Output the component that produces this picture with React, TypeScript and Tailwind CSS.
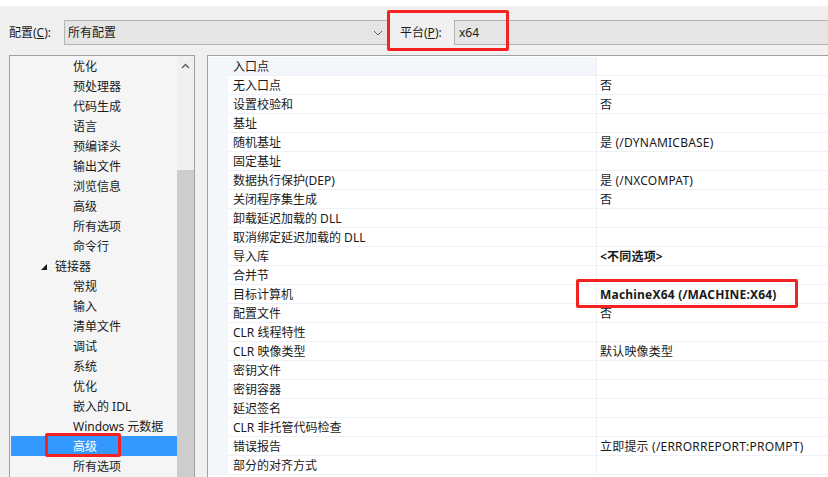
import React from "react";

const leftItems: { t: string; lvl: number; sel?: boolean; exp?: boolean }[] = [
  { t: "优化", lvl: 2 },
  { t: "预处理器", lvl: 2 },
  { t: "代码生成", lvl: 2 },
  { t: "语言", lvl: 2 },
  { t: "预编译头", lvl: 2 },
  { t: "输出文件", lvl: 2 },
  { t: "浏览信息", lvl: 2 },
  { t: "高级", lvl: 2 },
  { t: "所有选项", lvl: 2 },
  { t: "命令行", lvl: 2 },
  { t: "链接器", lvl: 1, exp: true },
  { t: "常规", lvl: 2 },
  { t: "输入", lvl: 2 },
  { t: "清单文件", lvl: 2 },
  { t: "调试", lvl: 2 },
  { t: "系统", lvl: 2 },
  { t: "优化", lvl: 2 },
  { t: "嵌入的 IDL", lvl: 2 },
  { t: "Windows 元数据", lvl: 2 },
  { t: "高级", lvl: 2, sel: true },
  { t: "所有选项", lvl: 2 },
];

const rows: { n: string; v?: string; b?: boolean; hl?: boolean }[] = [
  { n: "入口点", hl: true },
  { n: "无入口点", v: "否" },
  { n: "设置校验和", v: "否" },
  { n: "基址" },
  { n: "随机基址", v: "是 (/DYNAMICBASE)" },
  { n: "固定基址" },
  { n: "数据执行保护(DEP)", v: "是 (/NXCOMPAT)" },
  { n: "关闭程序集生成", v: "否" },
  { n: "卸载延迟加载的 DLL" },
  { n: "取消绑定延迟加载的 DLL" },
  { n: "导入库", v: "<不同选项>", b: true },
  { n: "合并节" },
  { n: "目标计算机", v: "MachineX64 (/MACHINE:X64)", b: true },
  { n: "配置文件", v: "否" },
  { n: "CLR 线程特性" },
  { n: "CLR 映像类型", v: "默认映像类型" },
  { n: "密钥文件" },
  { n: "密钥容器" },
  { n: "延迟签名" },
  { n: "CLR 非托管代码检查" },
  { n: "错误报告", v: "立即提示 (/ERRORREPORT:PROMPT)" },
  { n: "部分的对齐方式" },
];

export default function App() {
  return (
    <div
      className="relative w-[828px] h-[477px] overflow-hidden bg-[#f0f0f0] text-[12px] leading-none text-[#1a1a1a]"
      style={{ fontFamily: '"Noto Sans", "Noto Sans CJK SC", sans-serif' }}
    >
      <div className="h-[6px] bg-white" />
      {/* header */}
      <div className="mt-[14px] flex h-[25px] items-center">
        <div className="ml-[9px] w-[55px]">
          配置(<span className="underline">C</span>):
        </div>
        <div className="flex h-[25px] w-[324px] items-center justify-between border border-[#b4b4b4] bg-[#e5e5e5] pl-[3px] pr-[4px]">
          <span>所有配置</span>
          <svg width="10" height="6" viewBox="0 0 10 6" className="mt-[1px]">
            <path d="M1 1 L5 5 L9 1" fill="none" stroke="#606060" strokeWidth="1" />
          </svg>
        </div>
        <div className="ml-[12px] w-[54px]">
          平台(<span className="underline">P</span>):
        </div>
        <div className="flex h-[25px] flex-1 items-center border border-r-0 border-[#b4b4b4] bg-[#e5e5e5] pl-[4px]">
          x64
        </div>
      </div>

      {/* panels */}
      <div className="mt-[10px] flex">
        {/* left tree */}
        <div className="ml-[9px] flex h-[440px] w-[186px] border border-[#a0a0a0] bg-[#f5f5f5]">
          <div className="flex-1 pl-[1px]">
            {leftItems.map((it, i) => (
              <div
                key={i}
                className={`flex h-[20px] items-center pt-[2px] ${it.sel ? "bg-[#3399ff] text-white" : ""}`}
              >
                {it.lvl === 1 ? (
                  <>
                    <svg width="6" height="6" viewBox="0 0 6 6" className="ml-[30px]">
                      <path d="M6 0 L6 6 L0 6 Z" fill="#1a1a1a" />
                    </svg>
                    <span className="ml-[8px]">{it.t}</span>
                  </>
                ) : (
                  <span className="ml-[62px]">{it.t}</span>
                )}
              </div>
            ))}
          </div>
          <div className="flex w-[17px] flex-col bg-[#f0f0f0]">
            <div className="flex h-[20px] items-center justify-center">
              <svg width="9" height="6" viewBox="0 0 9 6">
                <path d="M1 5 L4.5 1.5 L8 5" fill="none" stroke="#606060" strokeWidth="1.5" />
              </svg>
            </div>
            <div className="h-[94px]" />
            <div className="flex-1 bg-[#cdcdcd]" />
          </div>
        </div>

        {/* property grid */}
        <div className="ml-[12px] flex-1 h-[440px] border-l border-t border-[#a0a0a0] bg-white pt-[1px]">
          {rows.map((r, i) => (
            <div key={i} className="flex h-[19px]">
              <div className="w-[20px] bg-[#f3f6fb]" />
              <div
                className={`flex w-[368px] items-center border-b border-[#eef1f6] pl-[5px] pt-[2px] ${r.hl ? "bg-[#f3f6fb]" : "bg-white"}`}
              >
                {r.n}
              </div>
              <div className="flex flex-1 items-center border-b border-l border-[#eef1f6] pl-[3px] pt-[2px]">
                <span className={r.b ? "font-bold tracking-[0.2px]" : "tracking-[0.2px]"}>{r.v ?? ""}</span>
              </div>
            </div>
          ))}
        </div>
      </div>

      {/* red annotation boxes */}
      <div className="absolute left-[387px] top-[10px] h-[41px] w-[122px] rounded-[2px] border-[3px] border-[#f52222]" />
      <div className="absolute left-[576px] top-[279px] h-[29px] w-[222px] rounded-[2px] border-[3px] border-[#f52222]" />
      <div className="absolute left-[45px] top-[433px] h-[24px] w-[76px] rounded-[2px] border-[3px] border-[#f52222]" />
    </div>
  );
}
